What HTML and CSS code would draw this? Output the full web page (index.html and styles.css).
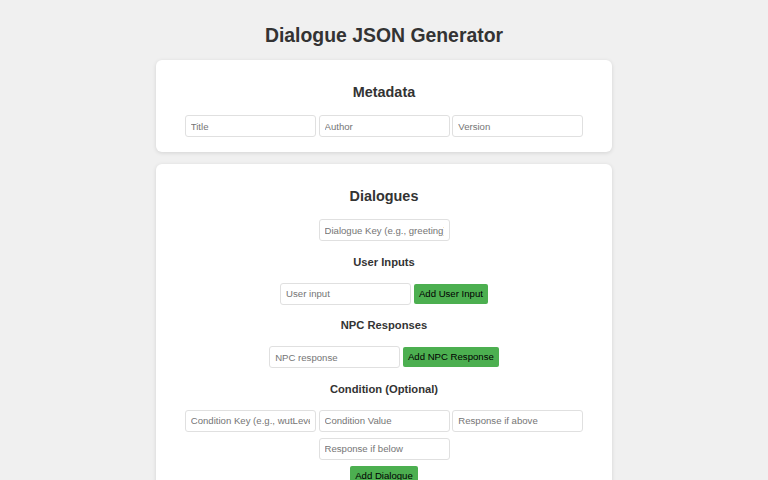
FILE: index.html
```html
<!DOCTYPE html>
<html lang="en">
<head>
<meta charset="utf-8">
<title>Dialogue JSON Generator</title>
<link rel="stylesheet" href="styles.css">
</head>
<body>
<h1 class="page-title">Dialogue JSON Generator</h1>
<div class="container">
  <section class="card">
    <h2 class="card-title">Metadata</h2>
    <div class="row">
      <input class="field" type="text" placeholder="Title">
      <input class="field" type="text" placeholder="Author">
      <input class="field" type="text" placeholder="Version">
    </div>
  </section>
  <section class="card">
    <h2 class="card-title">Dialogues</h2>
    <div class="row">
      <input class="field" type="text" placeholder="Dialogue Key (e.g., greeting)">
    </div>
    <h3 class="sub-title">User Inputs</h3>
    <div class="row">
      <input class="field" type="text" placeholder="User input">
      <button class="btn" type="button">Add User Input</button>
    </div>
    <h3 class="sub-title">NPC Responses</h3>
    <div class="row">
      <input class="field" type="text" placeholder="NPC response">
      <button class="btn" type="button">Add NPC Response</button>
    </div>
    <h3 class="sub-title">Condition (Optional)</h3>
    <div class="row">
      <input class="field" type="text" placeholder="Condition Key (e.g., wutLevel)">
      <input class="field" type="text" placeholder="Condition Value">
      <input class="field" type="text" placeholder="Response if above">
      <input class="field" type="text" placeholder="Response if below">
    </div>
    <div class="row">
      <button class="btn" type="button">Add Dialogue</button>
    </div>
  </section>
</div>
</body>
</html>
```

FILE: styles.css
```css
html, body {
  margin: 0;
  padding: 0;
}
body {
  background: #f0f0f0;
  font-family: "Liberation Sans", Arial, sans-serif;
  color: #333;
}
.page-title {
  font-size: 19.4px;
  font-weight: bold;
  text-align: center;
  margin: 24px 0 13px;
  line-height: 23px;
}
.container {
  width: 456px;
  margin: 0 auto;
}
.card {
  background: #fff;
  border-radius: 6px;
  box-shadow: 0 1px 4px rgba(0, 0, 0, 0.12);
  padding: 12px 20px 12px;
  margin-bottom: 12px;
  text-align: center;
}
.card-title {
  font-size: 14.4px;
  line-height: 17px;
  margin: 12px 0 11px;
  color: #333;
}
.sub-title {
  font-size: 11.2px;
  line-height: 13px;
  margin: 11.5px 0 11px;
  color: #333;
}
.row {
  font-size: 10px;
  line-height: 0;
}
.field {
  box-sizing: border-box;
  width: 131px;
  height: 22px;
  padding: 0 5px;
  margin: 3px 0;
  border: 1px solid #e0e0e0;
  border-radius: 3px;
  font-family: "Liberation Sans", Arial, sans-serif;
  font-size: 9.6px;
  color: #333;
  background: #fff;
  vertical-align: middle;
}
.field::placeholder {
  color: #757575;
}
.btn {
  box-sizing: border-box;
  height: 20px;
  padding: 0 5px;
  margin: 3px 0;
  border: none;
  border-radius: 2px;
  background: #4caf50;
  color: #000;
  font-family: "Liberation Sans", Arial, sans-serif;
  font-size: 9.6px;
  vertical-align: middle;
  line-height: 20px;
}
```
